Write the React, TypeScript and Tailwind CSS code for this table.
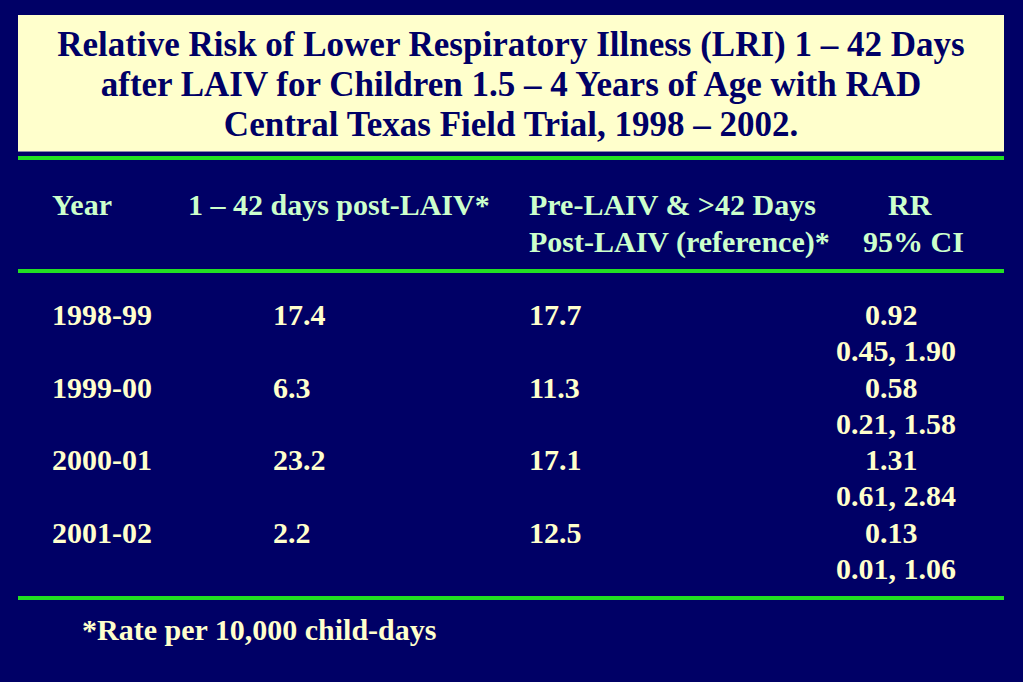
const rows = [
  { year: "1998-99", a: "17.4", b: "17.7", rr: "0.92", ci: "0.45, 1.90" },
  { year: "1999-00", a: "6.3", b: "11.3", rr: "0.58", ci: "0.21, 1.58" },
  { year: "2000-01", a: "23.2", b: "17.1", rr: "1.31", ci: "0.61, 2.84" },
  { year: "2001-02", a: "2.2", b: "12.5", rr: "0.13", ci: "0.01, 1.06" },
];

export default function App() {
  return (
    <div className="w-[1023px] h-[682px] bg-[#000066] pl-[18px] pr-[19px] pt-[15px] overflow-hidden font-['Liberation_Serif'] font-bold">
      {/* Title */}
      <div className="h-[137px] bg-[#ffffcc] text-[#000066] text-center text-[35px] leading-[40px] pt-[10px] border-b border-[#8888aa]">
        <div>Relative Risk of Lower Respiratory Illness (LRI) 1 – 42 Days</div>
        <div>after LAIV for Children 1.5 – 4 Years of Age with RAD</div>
        <div>Central Texas Field Trial, 1998 – 2002.</div>
      </div>
      <div className="mt-[4px] h-[4px] bg-[#22e022]" />

      {/* Header */}
      <div className="grid grid-cols-[136px_341px_334px_1fr] pl-[34px] pt-[26px] pb-[9px] text-[30px] leading-[37px] text-[#ccffcc]">
        <div>Year</div>
        <div>1 – 42 days post-LAIV*</div>
        <div>
          <div>Pre-LAIV &amp; &gt;42 Days</div>
          <div>Post-LAIV (reference)*</div>
        </div>
        <div>
          <div className="pl-[25px]">RR</div>
          <div>95% CI</div>
        </div>
      </div>
      <div className="h-[4px] bg-[#22e022]" />

      {/* Data */}
      <div className="pl-[34px] pt-[24px] pb-[9px] text-[30px] leading-[36.3px] text-[#ffffcc]">
        {rows.map((r) => (
          <div key={r.year} className="grid grid-cols-[221px_256px_307px_1fr]">
            <div>{r.year}</div>
            <div>{r.a}</div>
            <div>{r.b}</div>
            <div>
              <div className="pl-[29px]">{r.rr}</div>
              <div>{r.ci}</div>
            </div>
          </div>
        ))}
      </div>
      <div className="h-[4px] bg-[#22e022]" />

      {/* Footnote */}
      <div className="pl-[64px] pt-[12px] text-[30px] leading-[36px] text-[#ffffcc]">
        *Rate per 10,000 child-days
      </div>
    </div>
  );
}
